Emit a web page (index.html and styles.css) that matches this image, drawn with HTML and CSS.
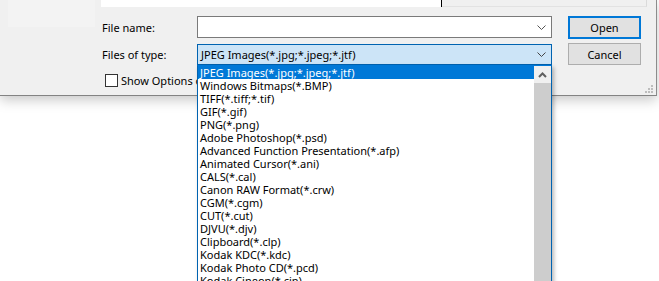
FILE: index.html
```html
<!DOCTYPE html>
<html>
<head>
<meta charset="utf-8">
<link rel="stylesheet" href="styles.css">
</head>
<body>
<div class="dialog">
  <div class="nav"><div class="nav-stub"></div></div>
  <div class="main">
    <div class="top">
      <div class="files"></div>
      <div class="preview"></div>
    </div>
    <div class="form">
      <label class="lbl">File name:</label>
      <div class="field input">
        <span class="val"></span>
        <svg class="chev" width="9" height="5" viewBox="0 0 9 5"><polyline points="0.5,0.5 4.5,4.5 8.5,0.5" fill="none" stroke="#555" stroke-width="1"/></svg>
      </div>
      <button class="btn btn-default">Open</button>

      <label class="lbl">Files of type:</label>
      <div class="field combo">
        <span class="val">JPEG Images(*.jpg;*.jpeg;*.jtf)</span>
        <svg class="chev" width="9" height="5" viewBox="0 0 9 5"><polyline points="0.5,0.5 4.5,4.5 8.5,0.5" fill="none" stroke="#444" stroke-width="1"/></svg>
      </div>
      <button class="btn">Cancel</button>

      <div class="opts">
        <span class="cbox"></span>
        <span class="opts-text">Show Options on top</span>
      </div>
    </div>
  </div>
  <div class="grip">
    <span class="dot" style="left:6px;top:0"></span>
    <span class="dot" style="left:3px;top:3px"></span>
    <span class="dot" style="left:6px;top:3px"></span>
    <span class="dot" style="left:0;top:6px"></span>
    <span class="dot" style="left:3px;top:6px"></span>
    <span class="dot" style="left:6px;top:6px"></span>
  </div>
</div>

<div class="dropdown">
  <ul class="list">
    <li class="sel">JPEG Images(*.jpg;*.jpeg;*.jtf)</li>
    <li>Windows Bitmaps(*.BMP)</li>
    <li>TIFF(*.tiff;*.tif)</li>
    <li>GIF(*.gif)</li>
    <li>PNG(*.png)</li>
    <li>Adobe Photoshop(*.psd)</li>
    <li>Advanced Function Presentation(*.afp)</li>
    <li>Animated Cursor(*.ani)</li>
    <li>CALS(*.cal)</li>
    <li>Canon RAW Format(*.crw)</li>
    <li>CGM(*.cgm)</li>
    <li>CUT(*.cut)</li>
    <li>DJVU(*.djv)</li>
    <li>Clipboard(*.clp)</li>
    <li>Kodak KDC(*.kdc)</li>
    <li>Kodak Photo CD(*.pcd)</li>
    <li>Kodak Cineon(*.cin)</li>
  </ul>
  <div class="scrollbar">
    <div class="sb-up">
      <svg width="9" height="6" viewBox="0 0 9 6"><polyline points="1,5 4.5,1.5 8,5" fill="none" stroke="#606060" stroke-width="2"/></svg>
    </div>
    <div class="sb-thumb"></div>
  </div>
</div>
</body>
</html>
```
FILE: styles.css
```css
html, body {
  margin: 0;
  padding: 0;
  background: #ffffff;
  overflow: hidden;
  width: 659px;
  height: 281px;
}
body {
  font-family: "Noto Sans", "Liberation Sans", sans-serif;
  font-size: 11px;
  color: #000;
  position: relative;
}
.dialog {
  position: relative;
  width: 656px;
  height: 95px;
  background: #f0f0f0;
  border-right: 1px solid #8c8c8c;
  border-bottom: 1px solid #838383;
  box-shadow: 0 4px 12px rgba(0, 0, 0, 0.22);
  display: flex;
}
.nav {
  width: 101px;
  flex: none;
}
.nav-stub {
  margin-left: 8px;
  width: 87px;
  height: 27px;
  background: #f3f3f3;
}
.main {
  flex: 1;
  display: flex;
  flex-direction: column;
}
.top {
  height: 7px;
  display: flex;
}
.files {
  width: 340px;
  background: #ffffff;
  border-right: 1px solid #000;
}
.preview {
  width: 205px;
  background: #f0f0f0;
  border-right: 1px solid #dadada;
  border-bottom: 1px solid #e2e2e2;
  box-sizing: border-box;
}
.form {
  display: grid;
  grid-template-columns: 96px 355px 16px 73px;
  grid-template-rows: 22px 22px auto;
  column-gap: 0;
  row-gap: 5px;
  margin-top: 9px;
}
.lbl {
  grid-column: 1;
  display: flex;
  align-items: center;
  padding-left: 1px;
  color: #000;
}
.field {
  grid-column: 2;
  box-sizing: border-box;
  display: flex;
  align-items: center;
  justify-content: space-between;
  padding: 0 5px 0 3px;
}
.input {
  background: #fff;
  border: 1px solid #7a7a7a;
  height: 22px;
}
.combo {
  background: #cce4f7;
  border: 1px solid #0063b1;
  height: 21px;
  margin-top: 1px;
}
.chev {
  display: block;
}
.btn {
  grid-column: 4;
  box-sizing: border-box;
  font: inherit;
  color: #000;
  background: #e1e1e1;
  border: 1px solid #adadad;
  padding: 0;
  height: 22px;
  width: 73px;
}
.btn-default {
  border: 2px solid #0078d7;
  height: 23px;
}
.opts {
  grid-column: 1 / 3;
  display: flex;
  align-items: center;
  margin-top: 3px;
  padding-left: 4px;
}
.cbox {
  box-sizing: border-box;
  width: 13px;
  height: 13px;
  background: #fff;
  border: 1px solid #333;
  flex: none;
}
.opts-text {
  margin-left: 3px;
}
.grip {
  position: absolute;
  right: 3px;
  bottom: 2px;
  width: 8px;
  height: 8px;
}
.dot {
  position: absolute;
  width: 2px;
  height: 2px;
  background: #bdbdbd;
}
.dropdown {
  position: absolute;
  left: 197px;
  top: 65px;
  width: 353px;
  height: 240px;
  background: #fff;
  border: 1px solid #0063b1;
  border-top-color: #0078d7;
  box-shadow: 2px 2px 4px rgba(0, 0, 0, 0.28);
  display: flex;
}
.list {
  list-style: none;
  margin: 0;
  padding: 0;
  flex: 1;
}
.list li {
  height: 13px;
  line-height: 13px;
  padding-left: 2px;
  white-space: nowrap;
}
.list li.sel {
  background: #0078d7;
  color: #fff;
}
.scrollbar {
  width: 17px;
  flex: none;
  display: flex;
  flex-direction: column;
  background: #f0f0f0;
}
.sb-up {
  height: 17px;
  display: flex;
  align-items: center;
  justify-content: center;
  background: #f0f0f0;
}
.sb-up svg {
  display: block;
}
.sb-thumb {
  flex: 1;
  background: #cdcdcd;
}
```
